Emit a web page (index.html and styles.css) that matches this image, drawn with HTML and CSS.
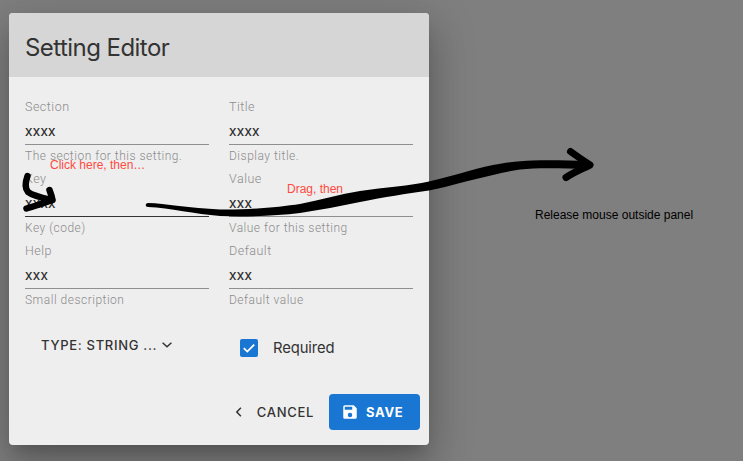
FILE: index.html
```html
<!DOCTYPE html>
<html lang="en">
<head>
<meta charset="utf-8">
<title>Setting Editor</title>
<link rel="stylesheet" href="styles.css">
</head>
<body>
<main class="panel">
  <header class="panel-head"><h1>Setting Editor</h1></header>
  <div class="fields">
    <div class="field"><label>Section</label><div class="value">xxxx</div><p>The section for this setting.</p></div>
    <div class="field"><label>Title</label><div class="value">xxxx</div><p>Display title.</p></div>
    <div class="field"><label>Key</label><div class="value dark">xxxx</div><p>Key (code)</p></div>
    <div class="field"><label>Value</label><div class="value">xxx</div><p>Value for this setting</p></div>
    <div class="field"><label>Help</label><div class="value">xxx</div><p>Small description</p></div>
    <div class="field"><label>Default</label><div class="value">xxx</div><p>Default value</p></div>
  </div>
  <div class="options">
    <button class="type-btn">TYPE: STRING ...<svg width="14" height="14" viewBox="0 0 14 14"><path d="M2.600 4.800 7 8.800l4.400-4" fill="none" stroke="#333" stroke-width="1.500"/></svg></button>
    <div class="required">
      <span class="check"><svg width="18" height="18" viewBox="0 0 18 18"><path d="M3.800 9.200 7.300 12.600 14.200 5.600" fill="none" stroke="#fff" stroke-width="1.800"/></svg></span>
      <span>Required</span>
    </div>
  </div>
  <footer class="actions">
    <button class="cancel"><svg width="14" height="14" viewBox="0 0 14 14"><path d="M8.900 2.800 4.800 7l4.100 4.200" fill="none" stroke="#333" stroke-width="1.500"/></svg><span>CANCEL</span></button>
    <button class="save"><svg width="18" height="18" viewBox="0 0 24 24"><path fill="#fff" d="M17 3H5a2 2 0 0 0-2 2v14a2 2 0 0 0 2 2h14a2 2 0 0 0 2-2V7l-4-4zm-5 16a3 3 0 1 1 0-6 3 3 0 0 1 0 6zm3-10H5V5h10v4z"/></svg><span>SAVE</span></button>
  </footer>
</main>
<svg class="scribble" width="743" height="461" viewBox="0 0 743 461">
  <path fill="#000" d="M148 203C165 203.500 190 208 220 209.500C250 210 280 207 300 204C320 200 340 194 360 191C385 187 410 186 429 181.500C440 179 450 176 460 173.500C472 170 482 167 493 165C508 162 520 161 533 160.500C550 160 570 160.500 588 161L588 169C570 168.500 550 168 533 168.500C518 169 505 172 493 175C482 177.500 470 180.500 460 183C450 185.500 440 188.500 429 190.500C405 194 385 197 360 202C340 206 320 210 300 213C275 216 245 217 220 216C195 214 170 208 148 207C145 207 145 203 148 203Z"/>
  <g fill="none" stroke="#000" stroke-linecap="round" stroke-linejoin="round">
    <path stroke-width="6.500" d="M27.500 176C25 183 25.500 189 28 192C33 196 43 198 52 200"/>
    <path stroke-width="6.500" d="M49.500 190C51 194 52 197 52.500 200C44 203 35 206 26.500 208.500"/>
    <path stroke-width="7" d="M570.500 151.500C578 157 584 161 590 165C582 169 574 172 566 177.500"/>
  </g>
</svg>
<span class="note note-click">Click here, then…</span>
<span class="note note-drag">Drag, then</span>
<span class="note-release">Release mouse outside panel</span>
</body>
</html>
```
FILE: styles.css
```css
* { box-sizing: border-box; }
html, body { margin: 0; height: 100%; }
body {
  width: 743px;
  height: 461px;
  overflow: hidden;
  background: #7f7f7f;
  padding: 13px 0 0 9px;
  font-family: Roboto, "Liberation Sans", sans-serif;
  color: #333;
}
.panel {
  width: 420px;
  height: 432px;
  background: #eeeeee;
  border-radius: 4px;
  overflow: hidden;
  box-shadow: 0 11px 15px -7px rgba(0,0,0,.2), 0 24px 38px 3px rgba(0,0,0,.14), 0 9px 46px 8px rgba(0,0,0,.12);
  display: flex;
  flex-direction: column;
}
.panel-head {
  height: 64px;
  background: #d6d6d6;
  padding: 6px 16px 0;
  display: flex;
  align-items: center;
}
.panel-head h1 {
  margin: 0;
  font: 400 24px/32px Inter, Roboto, sans-serif;
  letter-spacing: -.55px;
  color: #333;
}
.fields {
  display: grid;
  grid-template-columns: 184px 184px;
  column-gap: 20px;
  grid-auto-rows: 72px;
  padding: 22px 16px 0;
}
.field label {
  display: block;
  font-size: 12.500px;
  font-weight: 300;
  line-height: 16px;
  letter-spacing: .5px;
  color: #8c8c8c;
}
.value {
  height: 30px;
  padding-top: 6px;
  font-size: 15px;
  line-height: 20px;
  letter-spacing: .25px;
  color: #2b2b2b;
  border-bottom: 1px solid #8f8f8f;
}
.value.dark { border-bottom-color: #333; }
.field p {
  margin: 3px 0 0;
  font-size: 12px;
  font-weight: 300;
  line-height: 16px;
  letter-spacing: .5px;
  color: #8c8c8c;
}
.options {
  display: grid;
  grid-template-columns: 204px 184px;
  padding: 0 16px;
  height: 79px;
}
button {
  border: 0;
  background: none;
  font-family: Inter, Roboto, sans-serif;
  cursor: pointer;
  padding: 0;
}
.type-btn {
  align-self: start;
  justify-self: start;
  margin: 20px 0 0 16px;
  display: flex;
  align-items: center;
  gap: 3px;
  height: 20px;
  font-size: 13px;
  font-weight: 500;
  letter-spacing: .7px;
  color: #333;
  white-space: nowrap;
}
.required {
  display: flex;
  align-items: center;
  align-self: start;
  margin: 23px 0 0 11px;
  height: 20px;
  gap: 15px;
  font: 400 14.800px/20px Inter, Roboto, sans-serif;
  letter-spacing: -.1px;
  color: #333;
}
.check {
  width: 18px;
  height: 18px;
  border-radius: 2px;
  background: #1976d2;
  display: block;
}
.check svg { display: block; }
.actions {
  display: flex;
  justify-content: flex-end;
  align-items: flex-start;
  padding: 0 9px;
  gap: 15px;
}
.cancel {
  display: flex;
  align-items: center;
  height: 36px;
  gap: 11px;
  font-size: 13px;
  font-weight: 500;
  letter-spacing: .7px;
  color: #333;
}
.save {
  width: 91px;
  height: 36px;
  border-radius: 4px;
  background: #1976d2;
  display: flex;
  align-items: center;
  padding-left: 12px;
  gap: 7px;
  font-size: 13px;
  font-weight: 700;
  letter-spacing: .7px;
  color: #fff;
}
.scribble {
  position: absolute;
  left: 0;
  top: 0;
  pointer-events: none;
}
.note {
  position: absolute;
  font: 12px/14px "Liberation Sans", Arial, sans-serif;
  color: #ff4a40;
  white-space: nowrap;
}
.note-click { left: 50px; top: 158px; }
.note-drag { left: 287px; top: 182px; }
.note-release {
  position: absolute;
  left: 535px;
  top: 208px;
  font: 12px/14px "Liberation Sans", Arial, sans-serif;
  color: #000;
  white-space: nowrap;
}
```
